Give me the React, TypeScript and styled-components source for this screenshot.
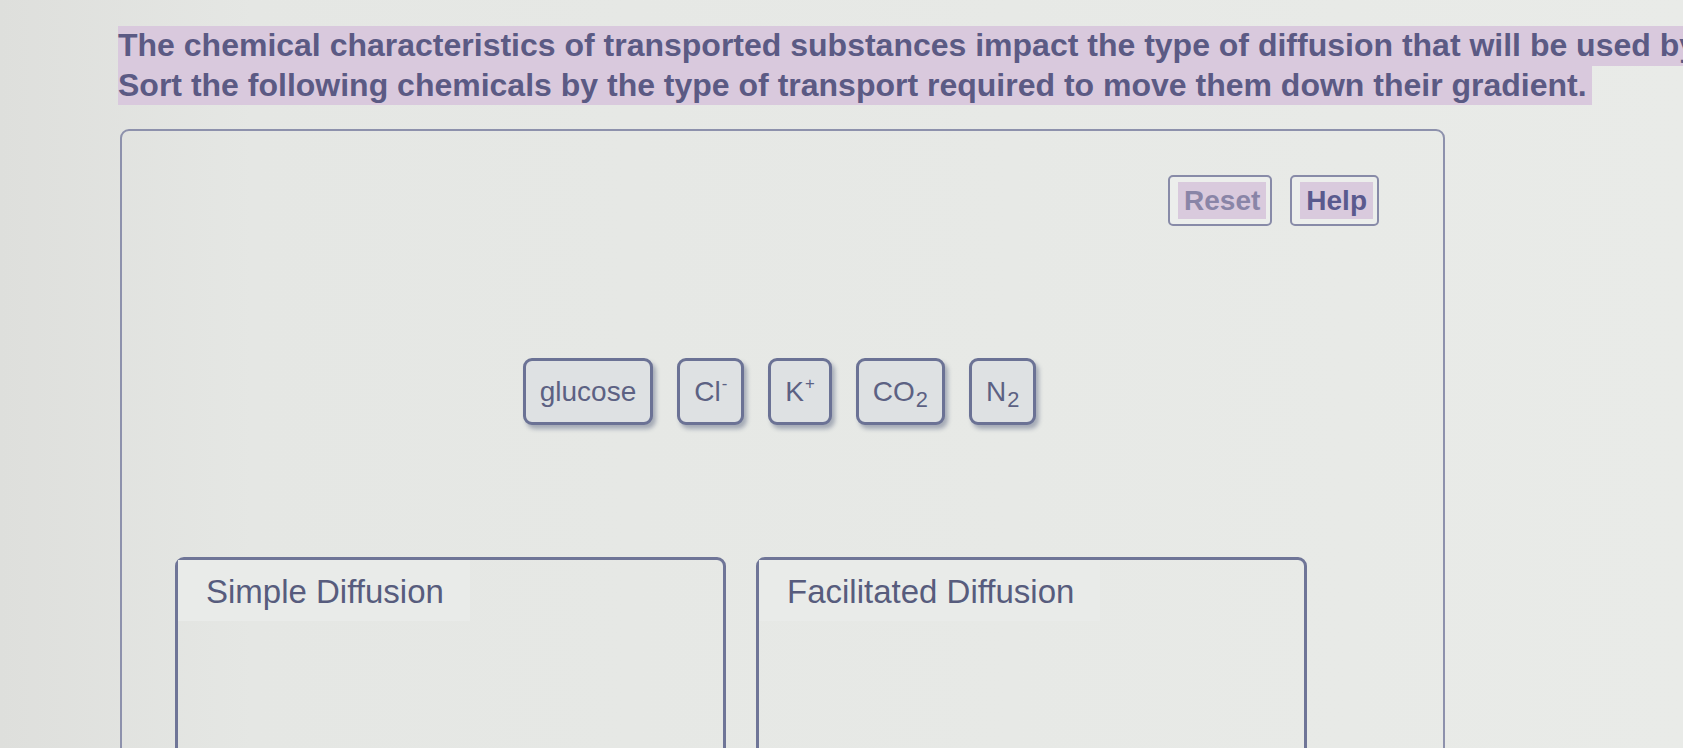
import React from "react";
import styled, { createGlobalStyle } from "styled-components";

const Global = createGlobalStyle`
  html, body {
    margin: 0;
    padding: 0;
    background: #e5e7e4;
    overflow: hidden;
    width: 1683px;
    height: 748px;
  }
  body {
    font-family: "Liberation Sans", Arial, sans-serif;
  }
`;

const Page = styled.div`
  width: 1683px;
  height: 748px;
  overflow: hidden;
  box-sizing: border-box;
  padding: 26px 0 0 118px;
  background: linear-gradient(90deg, #dedfdc 0%, #e5e7e4 15%, #e7e9e6 60%, #e9ebe8 100%);
`;

const Title = styled.div`
  display: flex;
  flex-direction: column;
  align-items: flex-start;
`;

const TitleLine = styled.div`
  height: 39.5px;
  line-height: 39.5px;
  font-size: 32px;
  font-weight: 700;
  color: #5b5a84;
  background: #d9c9dd;
  white-space: nowrap;
  padding-right: 5px;
`;

const Panel = styled.div`
  margin: 24px 0 0 2px;
  width: 1325px;
  height: 700px;
  box-sizing: border-box;
  border: 2px solid #8d91ac;
  border-radius: 9px;
  display: flex;
  flex-direction: column;
`;

const Toolbar = styled.div`
  display: flex;
  justify-content: flex-end;
  gap: 18px;
  padding: 44px 64px 0 0;
`;

const ToolButton = styled.div`
  height: 51px;
  box-sizing: border-box;
  border: 2.5px solid #888ba8;
  border-radius: 5px;
  background: #eceeec;
  padding: 5px 4px 5px 8px;
  display: flex;
`;

const ToolLabel = styled.span<{ $muted?: boolean }>`
  display: flex;
  align-items: center;
  padding: 0 6px;
  background: #d9cadd;
  font-size: 28px;
  font-weight: 700;
  color: ${(p) => (p.$muted ? "#8985a7" : "#5a5a8e")};
`;

const ChipRow = styled.div`
  display: flex;
  justify-content: center;
  gap: 24px;
  margin-top: 132px;
  padding-right: 6px;
`;

const Chip = styled.div`
  height: 67px;
  box-sizing: border-box;
  border: 3px solid #6b7295;
  border-radius: 9px;
  background: #dee1e3;
  box-shadow: 3px 4px 4px rgba(85, 95, 125, 0.45);
  padding: 0 14px;
  display: flex;
  align-items: center;
  color: #5c6183;
`;

const ChipText = styled.span`
  font-size: 28px;
  line-height: 32px;
  white-space: nowrap;
`;

const Sup = styled.sup`
  font-size: 0.6em;
  line-height: 0;
  vertical-align: 0.7em;
  margin-left: 1px;
`;

const Sub = styled.sub`
  font-size: 0.78em;
  line-height: 0;
  vertical-align: -0.32em;
  margin-left: 1px;
`;

const Boxes = styled.div`
  display: flex;
  gap: 30px;
  margin-top: 132px;
  padding-left: 53px;
`;

const Bin = styled.div`
  width: 551px;
  height: 260px;
  box-sizing: border-box;
  border: 3px solid #6f7597;
  border-radius: 9px;
  display: flex;
  flex-direction: column;
  align-items: flex-start;
`;

const BinLabel = styled.div`
  padding: 12px 26px 9px 28px;
  background: #e9ebe9;
  font-size: 33px;
  line-height: 40px;
  color: #575c7d;
`;

const chips: React.ReactNode[] = [
  "glucose",
  <>
    Cl<Sup>-</Sup>
  </>,
  <>
    K<Sup>+</Sup>
  </>,
  <>
    CO<Sub>2</Sub>
  </>,
  <>
    N<Sub>2</Sub>
  </>,
];

export default function App() {
  return (
    <>
      <Global />
      <Page>
        <Title>
          <TitleLine>
            The chemical characteristics of transported substances impact the type of diffusion that will be used by
          </TitleLine>
          <TitleLine>
            Sort the following chemicals by the type of transport required to move them down their gradient.
          </TitleLine>
        </Title>
        <Panel>
          <Toolbar>
            <ToolButton>
              <ToolLabel $muted>Reset</ToolLabel>
            </ToolButton>
            <ToolButton>
              <ToolLabel>Help</ToolLabel>
            </ToolButton>
          </Toolbar>
          <ChipRow>
            {chips.map((c, i) => (
              <Chip key={i}>
                <ChipText>{c}</ChipText>
              </Chip>
            ))}
          </ChipRow>
          <Boxes>
            <Bin>
              <BinLabel>Simple Diffusion</BinLabel>
            </Bin>
            <Bin>
              <BinLabel>Facilitated Diffusion</BinLabel>
            </Bin>
          </Boxes>
        </Panel>
      </Page>
    </>
  );
}
